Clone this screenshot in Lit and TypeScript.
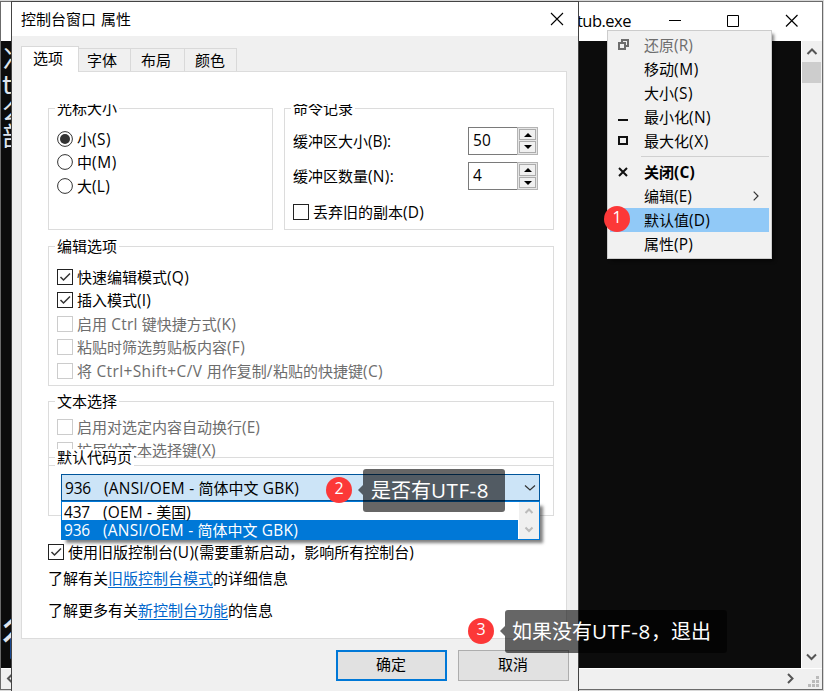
import { LitElement, html, css, svg } from "lit";
import { customElement } from "lit/decorators.js";

type Row = { text: string; w: number; on?: boolean; off?: boolean };

// Splits a label in CJK and Latin runs; Latin runs are spaced so that the label gets width w.
const label = (text: string, w = 0, cls = "") => html`<span class="t ${cls}" data-w=${w}>${text
  .split(/([\u0020-\u007e]+)/)
  .filter((p) => p)
  .map((p) => (/^[\u0020-\u007e]/.test(p) ? html`<i>${p}</i>` : p))}</span>`;

const tick = svg`<path d="M3.5 8 L6.5 11 L13 4.5" fill="none" stroke="#333" stroke-width="1.5"/>`;

@customElement("app-root")
export class AppRoot extends LitElement {
  static styles = css`
    :host { display: block; position: relative; width: 824px; height: 691px; overflow: hidden;
      background: #d8d8d8; font: 15px/20px "Open Sans", "Noto Sans CJK SC", sans-serif; color: #000; }
    * { box-sizing: border-box; }
    svg { display: block; flex: none; }
    i { font-style: normal; font-size: 1.03em; line-height: 1; }
    .t { white-space: pre; display: block; flex: none; }

    .console { position: absolute; left: 0; top: 1px; width: 823px; height: 689px; border: 1px solid #6b6b6b;
      background: #fff; display: flex; flex-direction: column; }
    .ctitle { height: 39px; flex: none; display: flex; align-items: center; padding-left: 576px; }
    .ctitle .t { font-size: 16px; margin-top: -1px; }
    .ctitle svg { margin-left: auto; margin-right: 22px; margin-top: -1px; }
    .cbody { display: flex; height: 627px; flex: none; }
    .screen { width: 800px; background: #0c0c0c; overflow: hidden; position: relative; }
    .glyph { position: absolute; left: 1px; width: 10px; overflow: hidden; color: #dfe5ee;
      font: 26px/26px "Noto Sans CJK SC", sans-serif; height: 26px; }
    .g1 { top: 3px; } .g2 { top: 29px; } .g3 { top: 55px; } .g4 { top: 81px; }
    .g5 { top: 565px; height: 56px; font-size: 46px; line-height: 56px; }
    .vbar { width: 20px; margin-left: 1px; background: #f0f0f0; display: flex; flex-direction: column; }
    .thumb { height: 21px; width: 19px; background: #cdcdcd; }
    .vbar .down { margin-top: auto; }
    .hbar { flex: 1; background: #f0f0f0; margin-top: 1px; display: flex; justify-content: space-between; padding: 0 2px 0 5px; }

    .dialog { position: absolute; left: 11px; top: 1px; width: 568px; height: 700px; background: #f0f0f0; isolation: isolate;
      border: 1px solid #444; display: flex; flex-direction: column; }
    .dtitle { height: 34px; flex: none; background: #fff; display: flex; justify-content: space-between; align-items: center;
      padding: 0 14px 0 9px; }
    .tabs { margin: 10px 0 0 9px; height: 25px; display: flex; align-items: flex-end; }
    .tab { height: 24px; border: 1px solid #d9d9d9; border-left: 0; display: flex; align-items: center;
      padding: 0 0 1px 10px; margin-bottom: -1px; }
    .tab:first-child { padding-left: 8px; }
    .tab:nth-child(2) { padding-left: 8px; }
    .tab.sel { height: 26px; background: #fff; border-left: 1px solid #d9d9d9; border-bottom: 0; padding: 0 0 3px 11px; z-index: 1; }
    .panel { margin: 0 11px 0 9px; height: 568px; background: #fff; border: 1px solid #dcdcdc; padding: 36px 12px 0 26px; flex: none; }
    .pair { display: flex; gap: 11px; }
    .group { border: 1px solid #dcdcdc; position: relative; padding-left: 8px; }
    .legend { display: flex; align-items: center; width: fit-content; height: 20px; background: #fff; padding: 0 2px 2px;
      margin: -10px 0 0 -2px; }
    .legend.cut { height: 14px; margin-top: -5px; overflow: hidden; align-items: flex-start; }
    .legend.cut .t { margin-top: -6px; }
    .cursor { width: 225px; height: 122px; }
    .history { width: 270px; height: 122px; }
    .row { display: flex; align-items: center; gap: 4px; height: 23.5px; }
    .row.off { color: #6d6d6d; }
    .radios { padding-top: 9px; }
    .fields { padding-top: 5px; }
    .edits { padding-top: 8px; }
    .edit { height: 140px; margin-top: 16px; }
    .field { display: flex; align-items: center; justify-content: space-between; height: 35.5px; padding-right: 15px; }
    .spin { width: 70px; height: 28px; border: 1px solid #7a7a7a; display: flex; justify-content: space-between; padding-left: 4px; }
    .spin .t { height: 20px; margin-top: 2px; }
    .btns { width: 21px; background: #e6e6e6; border: 1px solid #b4b4b4; margin: -1px; display: flex; flex-direction: column; padding: 1px; gap: 1px; }
    .btns div { flex: 1; background: #f0f0f0; border: 1px solid #acacac; display: flex; align-items: center; justify-content: center; }
    .textbox { height: 115px; margin-top: 15px; padding: 0; display: flex; flex-direction: column; }
    .textbox .legend { margin-left: 6px; flex: none; }
    .textbox .row { padding-left: 8px; flex: none; }
    .wrapline { border-bottom: 1px solid #dcdcdc; height: 56px; flex: none; }
    .wrapped { padding-top: 3px; }
    .gap { height: 8px; border-bottom: 1px solid #dcdcdc; flex: none; }
    .textbox .legend.cp { height: 17px; margin: -17px 0 0 6px; position: relative; }
    .combo { position: relative; width: 479px; height: 27px; margin: 8px 0 0 12px; border: 1px solid #00559b; background: #cce4f7;
      display: flex; align-items: center; justify-content: space-between; padding: 0 3px; flex: none; }
    .cols { display: flex; gap: 13px; }
    .list { position: relative; width: 479px; height: 39px; margin-left: 12px; border: 1px solid #0078d7; background: #fff; display: flex;
      box-shadow: 4px 4px 3px -1px rgba(0,0,0,.5); flex: none; z-index: 1; }
    .opts { width: 456px; }
    .opt { height: 18px; padding-left: 2px; display: flex; align-items: center; }
    .opt .cols { margin-top: 1px; }
    .opt.sel { height: 20px; background: #0078d7; color: #fff; }
    .opt.sel .cols { margin-top: -1px; }
    .lbar { flex: 1; background: #f0f0f0; margin-left: 1px; }
    .old { margin-top: 24px; height: 24px; }
    .link { display: flex; height: 20px; margin-top: 4px; }
    .link.b { margin-top: 12px; }
    .link .a { color: #0066cc; text-decoration: underline; text-underline-offset: 3px; text-decoration-thickness: 1px; }
    .foot { display: flex; justify-content: flex-end; gap: 11px; padding: 11px 9px 0 0; }
    .btn { width: 111px; height: 31px; background: #e1e1e1; border: 1px solid #adadad; display: flex; align-items: center; justify-content: center; padding: 0 1px 3px 0; }
    .btn.def { border: 2px solid #0078d7; }

    .menu { position: absolute; left: 607px; top: 30px; width: 165px; height: 229px; background: #f1f1f1; border: 1px solid #ccc; padding: 2px;
      box-shadow: 3px 3px 3px -1px rgba(0,0,0,.5); }
    .item { height: 24px; display: flex; align-items: center; width: 159px; }
    .item svg { margin: 0 12px 0 7px; }
    .item svg.arrow { margin: 0 10px 0 auto; }
    .item.off { color: #6d6d6d; }
    .item.sel { background: #91c9f7; }
    .bold { font-weight: 700; }
    .sep { margin-left: 31px; border-bottom: 1px solid #d0d0d0; height: 4px; margin-bottom: 3px; }

    .badge { position: absolute; width: 26px; height: 26px; border-radius: 50%; background: #fc3838; color: #fff;
      font: 16px/23px "Open Sans", sans-serif; text-align: center; }
    .n1 { left: 604px; top: 206px; } .n2 { left: 326px; top: 477px; } .n3 { left: 468px; top: 618px; }
    .tip { position: absolute; height: 43px; border-radius: 3px; background: rgba(0,0,0,.6); color: #fff; font-size: 20px; line-height: 43px; padding-left: 7px; }
    .tip::before { content: ""; position: absolute; left: -5.5px; top: 16px; border: solid transparent; border-width: 5.5px 5.5px 5.5px 0;
      border-right-color: rgba(0,0,0,.6); }
    .tip i { font-weight: 500; }
    .t2 { left: 363px; top: 469px; width: 142px; padding-left: 8px; }
    .t3 { left: 505px; top: 610px; width: 222px; }
  `;

  firstUpdated() {
    this.renderRoot.querySelectorAll<HTMLElement>(".t").forEach((el) => {
      const w = Number(el.dataset.w);
      const runs = [...el.querySelectorAll("i")];
      if (!w || !runs.length) return;
      const r = document.createRange();
      r.selectNodeContents(el);
      const n = runs.reduce((s, i) => s + (i.textContent ?? "").length, 0);
      const gap = (w - r.getBoundingClientRect().width) / n;
      runs.forEach((i) => (i.style.letterSpacing = `${gap}px`));
    });
  }

  check(r: Row) {
    return html`<div class="row ${r.off ? "off" : ""}">
      <svg width="16" height="16"><rect x=".5" y=".5" width="15" height="15" fill="#fff" stroke=${r.off ? "#ccc" : "#222"} />${r.on ? tick : ""}</svg>
      ${label(r.text, r.w)}</div>`;
  }

  radio(r: Row) {
    return html`<div class="row"><svg width="16" height="16"><circle cx="8" cy="8" r="7.4" fill="#fff" stroke="#333" />${r.on
      ? svg`<circle cx="8" cy="8" r="5" fill="#333"/>` : ""}</svg>${label(r.text, r.w)}</div>`;
  }

  spin(v: string, w: number) {
    return html`<div class="spin">${label(v, w)}<div class="btns">
      <div><svg width="8" height="4"><path d="M0 4L4 0L8 4Z" /></svg></div>
      <div><svg width="8" height="4"><path d="M0 0L4 4L8 0Z" /></svg></div></div></div>`;
  }

  chev(w: number, h: number, d: string, color = "#555", sw = 2, cls = "") {
    return html`<svg class=${cls} width=${w} height=${h}><path d=${d} fill="none" stroke=${color} stroke-width=${sw} /></svg>`;
  }

  item(text: string, w: number, icon: unknown = "", cls = "", arrow = false) {
    return html`<div class="item ${cls}"><svg width="15" height="14">${icon}</svg>${label(text, w)}${arrow
      ? this.chev(6, 10, "M.7 .7L5 5L.7 9.3", "#333", 1.2, "arrow") : ""}</div>`;
  }

  render() {
    return html`
      <div class="console">
        <div class="ctitle">${label("tub.exe", 54)}
          <svg width="132" height="14"><g fill="none" stroke="#000"><path d="M1 6.5H13M59.5 1.5H70.5V12.5H59.5Z" /><path d="M118 1L129.5 12.5M129.5 1L118 12.5" stroke-width="1.2" /></g></svg>
        </div>
        <div class="cbody">
          <div class="screen">
            <span class="glyph g1">冫</span><span class="glyph g2">t</span><span class="glyph g3">么</span><span class="glyph g4">部</span>
            <span class="glyph g5">行</span>
          </div>
          <div class="vbar">${this.chev(19, 21, "M5.5 13L10 8.5L14.5 13")}<div class="thumb"></div>
            ${this.chev(19, 21, "M5 7.5L9.5 12L14 7.5", "#555", 2, "down")}</div>
        </div>
        <div class="hbar">${this.chev(8, 20, "M6 5.5L2 9.5L6 13.5")}
          <svg width="36" height="20"><path d="M4 5L8.5 9.5L4 14" fill="none" stroke="#555" stroke-width="2" />
            <path fill="#bbb" d="M32 7h3v3h-3zM28 11h3v3h-3zM32 11h3v3h-3zM24 15h3v3h-3zM28 15h3v3h-3zM32 15h3v3h-3z" /></svg></div>
      </div>

      <div class="dialog">
        <div class="dtitle">${label("控制台窗口 属性", 110)}
          <svg width="14" height="14"><path d="M1 1L13 13M13 1L1 13" stroke="#000" stroke-width="1.1" /></svg></div>
        <div class="tabs">${[["选项", 58], ["字体", 52], ["布局", 54], ["颜色", 52]].map(([n, w], i) => html`
          <div class="tab ${i ? "" : "sel"}" style="width:${w}px">${label(String(n))}</div>`)}</div>
        <div class="panel">
          <div class="pair">
            <div class="group cursor"><div class="legend cut">${label("光标大小")}</div>
              <div class="radios">${[{ text: "小(S)", w: 34, on: true }, { text: "中(M)", w: 40 }, { text: "大(L)", w: 33 }].map((r) => this.radio(r))}</div>
            </div>
            <div class="group history"><div class="legend cut">${label("命令记录")}</div>
              <div class="fields">
                <div class="field">${label("缓冲区大小(B):", 98)}${this.spin("50", 18)}</div>
                <div class="field">${label("缓冲区数量(N):", 101)}${this.spin("4", 9)}</div>
                <div class="field">${this.check({ text: "丢弃旧的副本(D)", w: 111 })}</div>
              </div>
            </div>
          </div>
          <div class="group edit"><div class="legend">${label("编辑选项")}</div>
            <div class="edits">${[
              { text: "快速编辑模式(Q)", w: 112, on: true },
              { text: "插入模式(I)", w: 74, on: true },
              { text: "启用 Ctrl 键快捷方式(K)", w: 159, off: true },
              { text: "粘贴时筛选剪贴板内容(F)", w: 168, off: true },
              { text: "将 Ctrl+Shift+C/V 用作复制/粘贴的快捷键(C)", w: 306, off: true },
            ].map((r) => this.check(r))}</div>
          </div>
          <div class="group textbox">
            <div class="wrapline"><div class="legend">${label("文本选择")}</div>
              <div class="wrapped">${this.check({ text: "启用对选定内容自动换行(E)", w: 183, off: true })}
              ${this.check({ text: "扩展的文本选择键(X)", w: 139, off: true })}</div></div>
            <div class="gap"></div>
            <div class="legend cp">${label("默认代码页")}</div>
            <div class="combo"><div class="cols">${label("936", 26)}${label("(ANSI/OEM - 简体中文 GBK)", 195)}</div>
              ${this.chev(12, 8, "M1 1.5L6 6L11 1.5", "#333", 1.2)}</div>
            <div class="list"><div class="opts">
              <div class="opt"><div class="cols">${label("437", 26)}${label("(OEM - 美国)", 88)}</div></div>
              <div class="opt sel"><div class="cols">${label("936", 26)}${label("(ANSI/OEM - 简体中文 GBK)", 195)}</div></div></div>
              <div class="lbar">${this.chev(20, 18, "M6.5 11L10 7.5L13.5 11", "#bbb")}${this.chev(20, 18, "M6.5 7.5L10 11L13.5 7.5", "#bbb")}</div></div>
          </div>
          <div class="old">${this.check({ text: "使用旧版控制台(U)(需要重新启动，影响所有控制台)", w: 346, on: true })}</div>
          <div class="link">${label("了解有关")}${label("旧版控制台模式", 0, "a")}${label("的详细信息")}</div>
          <div class="link b">${label("了解更多有关")}${label("新控制台功能", 0, "a")}${label("的信息")}</div>
        </div>
        <div class="foot"><div class="btn def">${label("确定")}</div><div class="btn">${label("取消")}</div></div>
      </div>

      <div class="menu">
        ${this.item("还原(R)", 49, svg`<path d="M2 5h6v6h-6zM5 5V2h6v6H8" fill="none" stroke="#6d6d6d" stroke-width="2"/>`, "off")}
        ${this.item("移动(M)", 55)}
        ${this.item("大小(S)", 49)}
        ${this.item("最小化(N)", 67, svg`<path d="M1 10h10" stroke="#111" stroke-width="2"/>`)}
        ${this.item("最大化(X)", 65, svg`<path d="M2 3h8v7h-8z" fill="none" stroke="#111" stroke-width="2"/>`)}
        <div class="sep"></div>
        ${this.item("关闭(C)", 51, svg`<path d="M2 3L10 11M10 3L2 11" stroke="#111" stroke-width="2"/>`, "bold")}
        ${this.item("编辑(E)", 48, "", "", true)}
        ${this.item("默认值(D)", 66, "", "sel")}
        ${this.item("属性(P)", 49)}
      </div>

      <div class="badge n1">1</div><div class="badge n2">2</div><div class="badge n3">3</div>
      <div class="tip t2">${label("是否有UTF-8", 118)}</div>
      <div class="tip t3">${label("如果没有UTF-8，退出", 199)}</div>
    `;
  }
}
